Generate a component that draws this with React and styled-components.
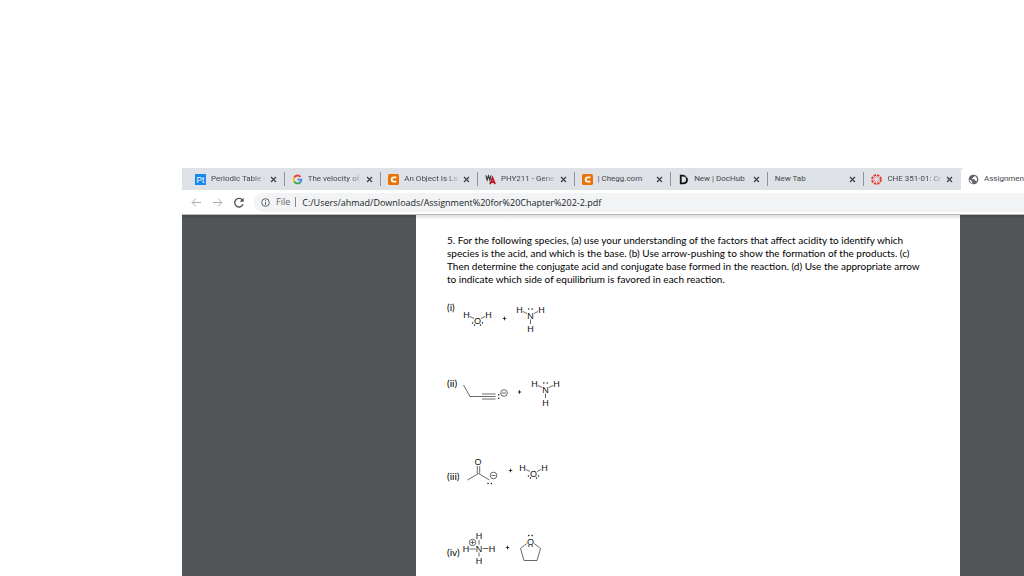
import React from "react";
import styled, { createGlobalStyle } from "styled-components";

const Global = createGlobalStyle`
  * { box-sizing: border-box; }
  body { margin: 0; background: #fff; overflow: hidden; }
`;

const uiFont = '"Open Sans", "Noto Sans", sans-serif';
const tabFont = 'Roboto, "Open Sans", sans-serif';
const textFont = 'Lato, "Open Sans", sans-serif';

const Desktop = styled.main`
  min-height: 100vh;
  padding: 168px 0 0 182px;
  display: flex;
  flex-direction: column;
  overflow: hidden;
`;
const Browser = styled.section`
  flex: 1;
  display: flex;
  flex-direction: column;
  font-family: ${uiFont};
`;
const TabStrip = styled.nav`
  display: flex;
  height: 22px;
  padding-left: 6px;
  background: #dee1e6;
`;
const Tab = styled.div`
  flex: 1 1 0;
  min-width: 0;
  display: flex;
  align-items: center;
  padding: 0 6px 0 7px;
  border-right: 1px solid ${(p) => (p.$last ? "transparent" : "#909499")};
  height: 14px;
  margin-top: 4px;
`;
const ActiveTab = styled.div`
  flex: 0 0 63px;
  display: flex;
  align-items: center;
  padding-left: 7px;
  background: #fff;
  border-top-left-radius: 4px;
  overflow: hidden;
`;
const TabLink = styled.a`
  flex: 1;
  min-width: 0;
  display: flex;
  align-items: center;
  gap: 5px;
  color: #45494e;
  text-decoration: none;
  font-family: ${tabFont};
  font-size: 8px;
  line-height: 14px;
`;
const TabTitle = styled.span`
  flex: 1;
  overflow: hidden;
  white-space: nowrap;
  mask-image: ${(p) => (p.$fade ? "linear-gradient(to right, #000 75%, transparent)" : "none")};
`;
const CloseButton = styled.button`
  flex: none;
  display: flex;
  border: 0;
  padding: 1px;
  margin-left: 2px;
  background: none;
`;
const Toolbar = styled.div`
  display: flex;
  align-items: center;
  height: 24px;
  padding-left: 8px;
  gap: 8px;
  background: #fff;
`;
const NavButton = styled.button`
  display: flex;
  border: 0;
  padding: 0;
  background: none;
  color: ${(p) => (p.$dim ? "#a9abae" : "#4d5156")};
`;
const AddressBar = styled.div`
  flex: 1;
  display: flex;
  align-items: center;
  gap: 6px;
  height: 19px;
  margin-left: 1px;
  padding-left: 7px;
  border-radius: 10px 0 0 10px;
  background: #f1f3f4;
  color: #5f6368;
  font-size: 9px;
`;
const Scheme = styled.span`
  padding-right: 5px;
  border-right: 1px solid #85898d;
  line-height: 10px;
`;
const AddressInput = styled.input`
  flex: 1;
  min-width: 0;
  border: 0;
  padding: 0;
  outline: 0;
  background: none;
  color: #202327;
  font: 9px ${uiFont};
`;
const Viewer = styled.div`
  flex: 1;
  display: flex;
  padding: 0 64px 0 234px;
  border-top: 1px solid #b9bbbd;
  background: linear-gradient(#44474a, #525659 4px);
`;
const Sheet = styled.article`
  flex: 1;
  min-width: 0;
  padding: 19px 31px 8px;
  background: linear-gradient(#dedede, #fff 5px);
  color: #000;
  font-family: ${textFont};
  font-size: 10px;
`;
const Question = styled.p`
  margin: 0 0 14px;
  line-height: 13px;
  white-space: nowrap;
`;
const Reactions = styled.div`
  display: flex;
  flex-direction: column;
  gap: 36px;
`;
const Reaction = styled.div`
  display: flex;
  height: 40px;
`;
const Label = styled.span`
  flex: 0 0 15px;
  padding-top: ${(p) => (p.$low ? 17 : 0)}px;
  line-height: 14px;
  white-space: nowrap;
`;
const Drawing = styled.svg`
  width: 110px;
  height: 40px;
  overflow: visible;
  fill: none;
  stroke: #444;
  stroke-width: 0.8;
  text {
    font: 9px "Liberation Sans", Arial, sans-serif;
    text-anchor: middle;
    fill: #111;
    stroke: none;
  }
  .dots { fill: #111; stroke: none; }
`;

const Icon = ({ children }) => (
  <svg width="11" height="11" viewBox="0 0 12 12" aria-hidden="true">
    {children}
  </svg>
);
const PtIcon = () => (
  <Icon>
    <rect width="12" height="12" fill="#1689f0" />
    <text x="6" y="9.5" fontSize="9" fontWeight="400" textAnchor="middle" fill="#fff" fontFamily="Liberation Sans, sans-serif">Pt</text>
  </Icon>
);
const GoogleIcon = () => (
  <Icon>
    <g fill="none" strokeWidth="2">
      <path d="M9.3 3.1A4.2 4.2 0 0 0 2.4 3.9" stroke="#ea4335" />
      <path d="M2.4 3.9a4.2 4.2 0 0 0 0 4.2" stroke="#fbbc05" />
      <path d="M2.4 8.1a4.2 4.2 0 0 0 6.4 1.1" stroke="#34a853" />
      <path d="M8.8 9.2A4 4 0 0 0 10.2 6.2H6.2" stroke="#4285f4" />
    </g>
  </Icon>
);
const CheggIcon = () => (
  <Icon>
    <rect width="12" height="12" rx="2" fill="#eb7100" />
    <path d="M9.2 3.7H6.3a2.3 2.3 0 0 0 0 4.6h2.9" fill="none" stroke="#fff" strokeWidth="2" />
  </Icon>
);
const WaIcon = () => (
  <Icon>
    <path d="M1 1.5 2.3 6.5 3.8 2 5.3 6.5 6.6 1.5" fill="none" stroke="#333" strokeWidth="1.2" />
    <path d="M5.5 11 8.2 4 11 11M6.3 8.8h4" fill="none" stroke="#c21522" strokeWidth="1.8" />
  </Icon>
);
const DocHubIcon = () => (
  <Icon>
    <path d="M3 1.8h2.5Q9.8 2 9.8 6T5.5 10.2H3Z" fill="none" stroke="#111" strokeWidth="2" />
    <path d="M6 0 11 5V0Z" fill="#dee1e6" />
    <path d="M6.500 .5 9.500 4V1.500Z" fill="#8fc7ed" />
  </Icon>
);
const CanvasIcon = () => (
  <Icon>
    <circle cx="6" cy="6" r="4.8" fill="none" stroke="#e23c32" strokeWidth="2" strokeDasharray="2.75 1.02" />
    <circle cx="6" cy="6" r="2.6" fill="none" stroke="#e23c32" strokeWidth="0.9" strokeDasharray="1 1.04" />
  </Icon>
);
const GlobeIcon = () => (
  <Icon>
    <circle cx="6" cy="6" r="5.3" fill="#5f6368" />
    <path d="M1.700 5.600 4.200 7.600v1.200l1.200 1.600Q2 9.800 1.700 5.600ZM7.400 2Q7 3.400 5.600 3.400v1.100H4.400v1.300h3v1.500h1.400v1.200Q10 7.600 10 5.700 9.500 3.200 7.400 2Z" fill="#fff" />
  </Icon>
);
const CloseIcon = () => (
  <svg width="7" height="7" viewBox="0 0 7 7" aria-hidden="true">
    <path d="m1 1 5 5M6 1 1 6" stroke="#3c4043" strokeWidth="1.2" />
  </svg>
);

const tabs = [
  ["Periodic Table - ", PtIcon, true],
  ["The velocity of", GoogleIcon, true],
  ["An Object Is La", CheggIcon, true],
  ["PHY211 - Gene", WaIcon, true],
  ["| Chegg.com", CheggIcon, false],
  ["New | DocHub", DocHubIcon, false],
  ["New Tab", null, false],
  ["CHE 351-01: Or", CanvasIcon, true],
];

const Dots = ({ at }) => (
  <g className="dots">
    {at.map(([x, y]) => <circle key={`${x},${y}`} cx={x} cy={y} r="0.75" />)}
  </g>
);

/* Water: oxygen centred on (x, y) */
const Water = ({ x, y }) => (
  <g>
    <text x={x - 11} y={y - 3}>H</text>
    <text x={x + 11} y={y - 3}>H</text>
    <text x={x} y={y + 3}>O</text>
    <path d={`M${x - 7.5} ${y - 4}l4 2M${x + 7.5} ${y - 4}l-4 2`} />
    <Dots at={[[x - 5, y + 2.5], [x - 3, y + 4.5], [x + 5, y + 2.5], [x + 3, y + 4.5]]} />
  </g>
);

/* Ammonia: nitrogen centred on (x, y) */
const Ammonia = ({ x, y }) => (
  <g>
    <text x={x - 11} y={y - 3}>H</text>
    <text x={x + 11} y={y - 3}>H</text>
    <text x={x} y={y + 3}>N</text>
    <text x={x} y={y + 16}>H</text>
    <path d={`M${x - 7.5} ${y - 4}l4 2M${x + 7.5} ${y - 4}l-4 2M${x} ${y + 4}v4.5`} />
    <Dots at={[[x - 1.7, y - 6.5], [x + 1.7, y - 6.5]]} />
  </g>
);

const Plus = ({ x, y }) => <path d={`M${x - 1.8} ${y}h3.6M${x} ${y - 1.8}v3.6`} stroke="#111" />;

export default function App() {
  return (
    <>
      <Global />
      <Desktop>
        <Browser>
          <TabStrip>
            {tabs.map(([title, Mark, fade], i) => (
              <Tab key={title} $last={i === tabs.length - 1}>
                <TabLink href="#">
                  {Mark && <Mark />}
                  <TabTitle $fade={fade}>{title}</TabTitle>
                </TabLink>
                <CloseButton aria-label={`Close ${title}`}><CloseIcon /></CloseButton>
              </Tab>
            ))}
            <ActiveTab>
              <TabLink href="#">
                <GlobeIcon />
                <TabTitle>Assignment</TabTitle>
              </TabLink>
            </ActiveTab>
          </TabStrip>
          <Toolbar>
            <NavButton aria-label="Back" $dim>
              <svg width="13" height="13" viewBox="0 0 13 13" fill="none" stroke="currentColor"><path d="M11 6.5H2.5M6 2.5l-4 4 4 4" /></svg>
            </NavButton>
            <NavButton aria-label="Forward" $dim>
              <svg width="13" height="13" viewBox="0 0 13 13" fill="none" stroke="currentColor"><path d="M2 6.5h8.5M7 2.5l4 4-4 4" /></svg>
            </NavButton>
            <NavButton aria-label="Reload">
              <svg width="13" height="13" viewBox="0 0 13 13" fill="none" stroke="currentColor" strokeWidth="1.3"><path d="M11 8.300A4.300 4.300 0 1 1 10.200 3.800" /><path d="M11.600 1.700v4H7.600Z" fill="currentColor" stroke="none" /></svg>
            </NavButton>
            <AddressBar>
              <svg width="9" height="9" viewBox="0 0 9 9" fill="none" stroke="currentColor" aria-hidden="true"><circle cx="4.5" cy="4.5" r="3.8" /><path d="M4.5 4v2.8M4.5 2.200v1" /></svg>
              <Scheme>File</Scheme>
              <AddressInput aria-label="Address" defaultValue="C:/Users/ahmad/Downloads/Assignment%20for%20Chapter%202-2.pdf" />
            </AddressBar>
          </Toolbar>
          <Viewer>
            <Sheet>
              <Question>
                5. For the following species, (a) use your understanding of the factors that affect acidity to identify which<br />
                species is the acid, and which is the base. (b) Use arrow-pushing to show the formation of the products. (c)<br />
                Then determine the conjugate acid and conjugate base formed in the reaction. (d) Use the appropriate arrow<br />
                to indicate which side of equilibrium is favored in each reaction.
              </Question>
              <Reactions>
                <Reaction>
                  <Label>(i)</Label>
                  <Drawing viewBox="462 300 110 40">
                    <Water x={477.5} y={320.5} />
                    <Plus x={504.5} y={318.5} />
                    <Ammonia x={530.5} y={315.5} />
                  </Drawing>
                </Reaction>
                <Reaction>
                  <Label>(ii)</Label>
                  <Drawing viewBox="462 376 110 40">
                    <path d="M463.5 385 470 396.5H495.5M482 394h13.5M482 399h13.5" />
                    <Dots at={[[498.7, 394.8], [498.7, 398.2]]} />
                    <circle cx="504" cy="393" r="3.3" />
                    <path d="M502 393h4" />
                    <Plus x={519.5} y={392} />
                    <Ammonia x={545.5} y={389.5} />
                  </Drawing>
                </Reaction>
                <Reaction>
                  <Label $low>(iii)</Label>
                  <Drawing viewBox="462 452 110 40">
                    <text x="478" y="465">O</text>
                    <path d="M467.5 480 478.5 473.5 489.5 480M477.3 466v7.5M479.7 466v7.5" />
                    <circle cx="493.5" cy="475.5" r="3.3" />
                    <path d="M491.5 475.5h4" />
                    <Dots at={[[488, 483.5], [491.4, 483.5]]} />
                    <Plus x={510.5} y={470.5} />
                    <Water x={533.5} y={473.5} />
                  </Drawing>
                </Reaction>
                <Reaction>
                  <Label $low>(iv)</Label>
                  <Drawing viewBox="462 528 110 40">
                    <text x="479" y="539">H</text>
                    <text x="466" y="551.5">H</text>
                    <text x="479" y="551.5">N</text>
                    <text x="492" y="551.5">H</text>
                    <text x="479" y="564">H</text>
                    <path d="M469.5 549h6M482.5 548.5h6M479 540v4.5M479 552.5v4" />
                    <circle cx="472.5" cy="542.5" r="3.2" />
                    <path d="M470.5 542.5h4M472.5 540.5v4" />
                    <Plus x={507.5} y={547.5} />
                    <text x="530.5" y="544.5">O</text>
                    <path d="M526.8 543.5 520.5 548.5 524 560.5H537L540.5 548.5 534.2 543.5" />
                    <Dots at={[[528.8, 535.5], [532.2, 535.5], [528.8, 546], [532.2, 546]]} />
                  </Drawing>
                </Reaction>
              </Reactions>
            </Sheet>
          </Viewer>
        </Browser>
      </Desktop>
    </>
  );
}
